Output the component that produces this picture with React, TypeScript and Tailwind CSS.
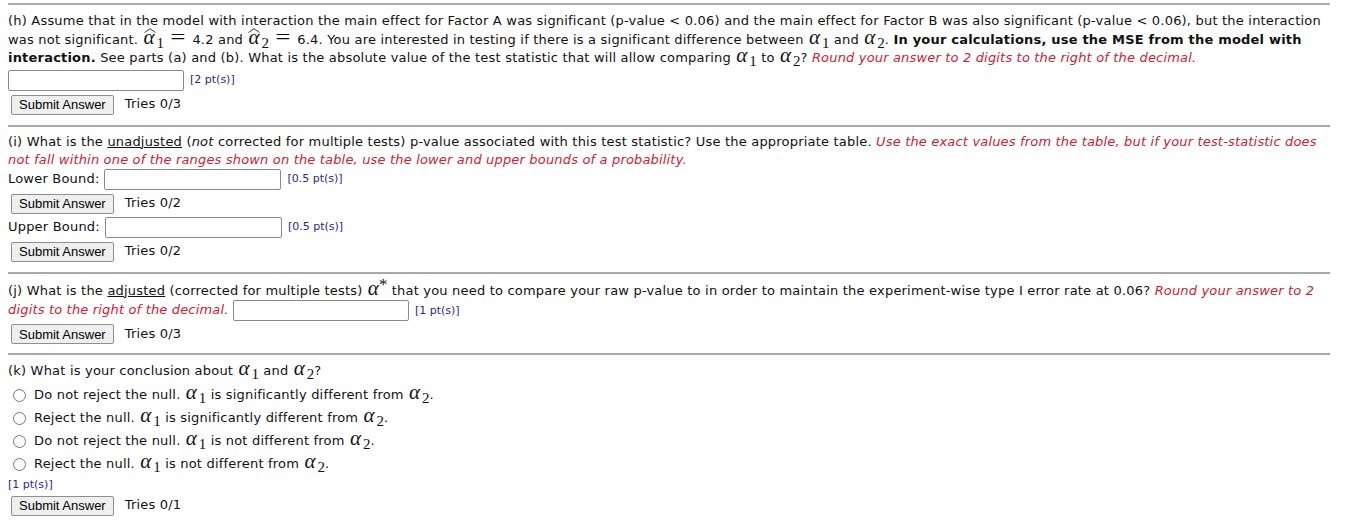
import React from "react";

const red = "text-[#cc2233] italic tracking-[0.17px]";

function Alpha({ sub, hat, star }: { sub?: string; hat?: boolean; star?: boolean }) {
  return (
    <span className="whitespace-nowrap font-['Liberation_Serif',serif] tracking-normal not-italic">
      <span className="relative inline-block h-[12px] leading-[12px] italic text-[21px] ml-[1px]">
        α
        {hat && (
          <svg className="absolute left-[0px] top-[-3px]" width="12" height="5" viewBox="0 0 12 5">
            <path d="M0.5 4.5 L6 0.8 L11.5 4.5" fill="none" stroke="#222" strokeWidth="0.9" />
          </svg>
        )}
      </span>
      {sub && <span className="relative top-[4px] text-[15px] ml-[2px] leading-[0px]">{sub}</span>}
      {star && <span className="relative top-[-5px] text-[17px] leading-[0px]">*</span>}
    </span>
  );
}

function Eq() {
  return (
    <span className="inline-block h-[12px] leading-[12px] w-[16px] ml-[6px] mr-[2px] text-center font-['Liberation_Serif',serif] text-[20px] scale-x-[1.35]">
      =
    </span>
  );
}

function Btn({ tries }: { tries: string }) {
  return (
    <div className="flex items-center h-[22px]">
      <button className="ml-[3px] h-[20px] px-[7px] bg-[#efefef] border border-[#8f8f8f] rounded-[2px] text-[13px] leading-none tracking-normal text-black font-['Liberation_Sans',Arial,sans-serif]">
        Submit Answer
      </button>
      <span className="ml-[11px]">Tries {tries}</span>
    </div>
  );
}

function Pts({ v }: { v: string }) {
  return <span className="ml-[6px] text-[11px] tracking-normal text-[#27278f]">[{v} pt(s)]</span>;
}

function Input({ w }: { w: string }) {
  return <span className={`inline-block align-middle h-[21px] border border-[#8a8a8a] rounded-[2px] bg-white ${w}`} />;
}

function Hr() {
  return <div className="w-[1322px] border-t-2 border-[#a9a9a9]" />;
}

function Radio({ children }: { children: React.ReactNode }) {
  return (
    <div className="flex items-center h-[23px] pl-[5px]">
      <span className="inline-block w-[13px] h-[13px] rounded-full border border-[#767676] bg-white mr-[8px]" />
      <span>{children}</span>
    </div>
  );
}

export default function App() {
  return (
    <div className="bg-white text-[#111] text-[13px] leading-[18.5px] tracking-[0.2px] font-['DejaVu_Sans',Verdana,sans-serif] pl-[8px] pt-[3px] w-[1345px] h-[525px] overflow-hidden">
      <Hr />
      <div className="pt-[7px]">
        <p className="w-[1322px]">
          (h) Assume that in the model with interaction the main effect for Factor A was significant (p-value &lt; 0.06) and the main effect for Factor B was also significant (p-value &lt; 0.06), but the interaction was not significant. <Alpha hat sub="1" /><Eq /> 4.2 and <Alpha hat sub="2" /><Eq /> 6.4. You are interested in testing if there is a significant difference between <Alpha sub="1" /> and <Alpha sub="2" />. <b>In your calculations, use the MSE from the model with interaction.</b> See parts (a) and (b). What is the absolute value of the test statistic that will allow comparing <Alpha sub="1" /> to <Alpha sub="2" />? <span className={red}>Round your answer to 2 digits to the right of the decimal.</span>
        </p>
        <div className="flex items-center h-[22px] mt-[2px]">
          <Input w="w-[176px]" />
          <Pts v="2" />
        </div>
        <div className="mt-[2px]"><Btn tries="0/3" /></div>
      </div>
      <div className="mt-[9px]"><Hr /></div>
      <div className="pt-[6px]">
        <p className="w-[1322px]">
          (i) What is the <u>unadjusted</u> (<i>not</i> corrected for multiple tests) p-value associated with this test statistic? Use the appropriate table. <span className={red}>Use the exact values from the table, but if your test-statistic does not fall within one of the ranges shown on the table, use the lower and upper bounds of a probability.</span>
        </p>
        <div className="flex items-center h-[20px]">
          <span className="mr-[5px]">Lower Bound:</span>
          <Input w="w-[177px]" />
          <Pts v="0.5" />
        </div>
        <div className="mt-[3px]"><Btn tries="0/2" /></div>
        <div className="flex items-center h-[20px] mt-[3px]">
          <span className="mr-[5px]">Upper Bound:</span>
          <Input w="w-[177px]" />
          <Pts v="0.5" />
        </div>
        <div className="mt-[3px]"><Btn tries="0/2" /></div>
      </div>
      <div className="mt-[9px]"><Hr /></div>
      <div className="pt-[8px]">
        <p className="w-[1322px]">
          (j) What is the <u>adjusted</u> (corrected for multiple tests) <Alpha star /> that you need to compare your raw p-value to in order to maintain the experiment-wise type I error rate at 0.06? <span className={red}>Round your answer to 2 digits to the right of the decimal.</span>{" "}
          <Input w="w-[176px]" />
          <Pts v="1" />
        </p>
        <div className="mt-[2px]"><Btn tries="0/3" /></div>
      </div>
      <div className="mt-[8px]"><Hr /></div>
      <div className="pt-[7px]">
        <p>
          (k) What is your conclusion about <Alpha sub="1" /> and <Alpha sub="2" />?
        </p>
        <div className="mt-[3px]">
          <Radio>Do not reject the null. <Alpha sub="1" /> is significantly different from <Alpha sub="2" />.</Radio>
          <Radio>Reject the null. <Alpha sub="1" /> is significantly different from <Alpha sub="2" />.</Radio>
          <Radio>Do not reject the null. <Alpha sub="1" /> is not different from <Alpha sub="2" />.</Radio>
          <Radio>Reject the null. <Alpha sub="1" /> is not different from <Alpha sub="2" />.</Radio>
        </div>
        <div className="text-[11px] tracking-normal text-[#27278f] leading-[18px]">[1 pt(s)]</div>
        <div className="mt-[1px]"><Btn tries="0/1" /></div>
      </div>
    </div>
  );
}
